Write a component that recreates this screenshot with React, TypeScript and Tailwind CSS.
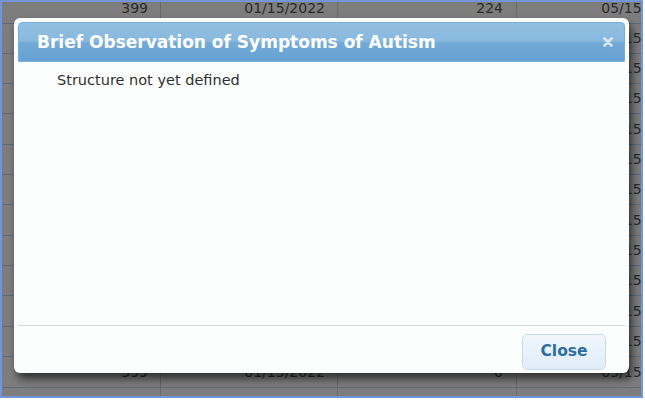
import React from "react";

const rows = [
  { h: "h-[30px]", a: "399", b: "01/15/2022", c: "224", d: "05/15/2022" },
  { h: "h-[30px]", a: "399", b: "01/15/2022", c: "224", d: "05/15/2022" },
  { h: "h-[30px]", a: "399", b: "01/15/2022", c: "224", d: "05/15/2022" },
  { h: "h-[30px]", a: "399", b: "01/15/2022", c: "224", d: "05/15/2022" },
  { h: "h-[31px]", a: "399", b: "01/15/2022", c: "224", d: "05/15/2022" },
  { h: "h-[30px]", a: "399", b: "01/15/2022", c: "224", d: "05/15/2022" },
  { h: "h-[30px]", a: "399", b: "01/15/2022", c: "224", d: "05/15/2022" },
  { h: "h-[31px]", a: "399", b: "01/15/2022", c: "224", d: "05/15/2022" },
  { h: "h-[30px]", a: "399", b: "01/15/2022", c: "224", d: "05/15/2022" },
  { h: "h-[30px]", a: "399", b: "01/15/2022", c: "224", d: "05/15/2022" },
  { h: "h-[31px]", a: "399", b: "01/15/2022", c: "224", d: "05/15/2022" },
  { h: "h-[30px]", a: "399", b: "01/15/2022", c: "224", d: "05/15/2022" },
  { h: "h-[31px]", a: "399", b: "01/15/2022", c: "0", d: "05/15/2022" },
  { h: "h-[30px]", a: "", b: "", c: "", d: "" },
];

export default function App() {
  return (
    <div className="relative w-[645px] h-[400px] bg-white overflow-hidden font-['DejaVu_Sans',sans-serif]">
      <div className="w-[643px] h-[398px] border-2 border-[#7396da] bg-[#7d7d7d] overflow-hidden">
        <div className="mt-[-8px] w-[900px] text-[14px] text-[#2a2a2a]">
          {rows.map((r, i) => (
            <div key={i} className={`flex ${r.h} border-b border-[#5c6b7b]`}>
              <div className="w-[159px] border-r border-[#6a6a6a] flex items-center justify-end pr-[12px]">{r.a}</div>
              <div className="w-[177px] border-r border-[#6a6a6a] flex items-center justify-end pr-[12px]">{r.b}</div>
              <div className="w-[179px] border-r border-[#6a6a6a] flex items-center justify-end pr-[13px]">{r.c}</div>
              <div className="w-[178px] border-r border-[#6a6a6a] flex items-center justify-end pr-[12px]">{r.d}</div>
              <div className="flex-1" />
            </div>
          ))}
        </div>
      </div>

      <div className="absolute left-[14px] top-[18px] w-[615px] h-[355px] bg-[#fcfdfd] rounded-[6px] shadow-[3px_6px_9px_rgba(0,0,0,0.6)] pt-[4px] px-[4px] pb-[3px] flex flex-col">
        <div className="h-[40px] shrink-0 rounded-t-[4px] border border-[#79aedb] bg-[linear-gradient(to_bottom,#93c0e3_0%,#88b8de_48%,#72aad7_52%,#65a1d2_100%)] flex items-center justify-between pl-[18px] pr-[11px]">
          <span className="text-white font-bold text-[17px] leading-none">Brief Observation of Symptoms of Autism</span>
          <svg width="10" height="10" viewBox="0 0 10 10" className="block">
            <path d="M1.5 1.5 L8.5 8.5 M8.5 1.5 L1.5 8.5" stroke="#dbe7f2" strokeWidth="2.6" strokeLinecap="round" />
          </svg>
        </div>
        <div className="flex-1 pl-[39px] pt-[9px] text-[14.5px] text-[#2f2f2f] leading-[18px]">
          Structure not yet defined
        </div>
        <div className="shrink-0 border-t border-[#c9dcec] flex justify-end pt-[8px] pr-[19px]">
          <button className="w-[84px] h-[36px] rounded-[5px] border border-[#c5dbec] bg-[linear-gradient(to_bottom,#f2f7fc_0%,#e8f2fb_50%,#dfecf8_100%)] text-[#2e6e9e] font-bold text-[15.5px] leading-none">
            Close
          </button>
        </div>
      </div>
    </div>
  );
}
